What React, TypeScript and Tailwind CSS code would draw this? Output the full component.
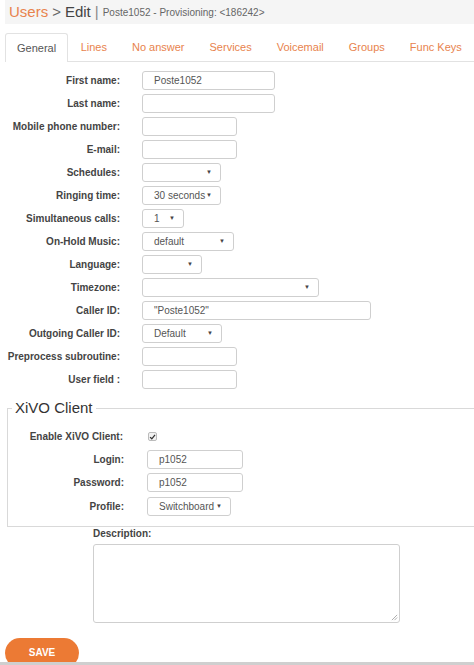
import React from 'react'

const font = { fontFamily: '"Liberation Sans", Arial, sans-serif' }

type Field = {
  label: string
  kind: 'text' | 'select'
  width: number
  value?: string
}

const fields: Field[] = [
  { label: 'First name:', kind: 'text', width: 133, value: 'Poste1052' },
  { label: 'Last name:', kind: 'text', width: 133 },
  { label: 'Mobile phone number:', kind: 'text', width: 95 },
  { label: 'E-mail:', kind: 'text', width: 95 },
  { label: 'Schedules:', kind: 'select', width: 79 },
  { label: 'Ringing time:', kind: 'select', width: 79, value: '30 seconds' },
  { label: 'Simultaneous calls:', kind: 'select', width: 42, value: '1' },
  { label: 'On-Hold Music:', kind: 'select', width: 92, value: 'default' },
  { label: 'Language:', kind: 'select', width: 60 },
  { label: 'Timezone:', kind: 'select', width: 177 },
  { label: 'Caller ID:', kind: 'text', width: 229, value: '"Poste1052"' },
  { label: 'Outgoing Caller ID:', kind: 'select', width: 80, value: 'Default' },
  { label: 'Preprocess subroutine:', kind: 'text', width: 95 },
  { label: 'User field :', kind: 'text', width: 95 },
]

const tabs = ['General', 'Lines', 'No answer', 'Services', 'Voicemail', 'Groups', 'Func Keys']

const Control: React.FC<{ f: Field }> = ({ f }) => (
  <div
    className="h-[19px] border border-[#cfcfcf] rounded-[3px] bg-white flex items-center justify-between pl-[11px] pr-[8px] text-[10px] text-[#555] whitespace-nowrap"
    style={{ width: f.width }}
  >
    <span>{f.value ?? ''}</span>
    {f.kind === 'select' && <span className="text-[6px] text-[#444]">▼</span>}
  </div>
)

const App: React.FC = () => {
  return (
    <div className="w-[474px] h-[665px] overflow-hidden bg-white relative" style={font}>
      {/* breadcrumb */}
      <div className="ml-[5px] h-[24px] bg-[#f5f5f5] flex items-center pl-[4px] gap-[4px] text-[#555] whitespace-nowrap">
        <span className="text-[15px] text-[#e8834d]">Users</span>
        <span className="text-[15px] text-[#666]">&gt;</span>
        <span className="text-[15px] text-[#444]">Edit</span>
        <span className="text-[15px] text-[#888]">|</span>
        <span className="text-[10px] text-[#666]">Poste1052 - Provisioning: &lt;186242&gt;</span>
      </div>

      {/* tabs */}
      <div className="ml-[5px] mt-[9px] flex border-b border-[#e2e2e2] h-[29px] text-[11px] whitespace-nowrap">
        {tabs.map((t, i) =>
          i === 0 ? (
            <div
              key={t}
              className="shrink-0 px-[11px] border border-b-0 border-[#e2e2e2] rounded-t-[3px] bg-white text-[#555] flex items-center -mb-px"
            >
              {t}
            </div>
          ) : (
            <div key={t} className="shrink-0 px-[12.5px] text-[#e8834d] flex items-center">
              {t}
            </div>
          )
        )}
      </div>

      {/* general fields */}
      <div className="mt-[7px]">
        {fields.map((f) => (
          <div key={f.label} className="h-[23px] flex items-center">
            <div className="w-[120px] shrink-0 text-right font-bold text-[10px] text-[#444] whitespace-nowrap">
              {f.label}
            </div>
            <div className="ml-[22px]">
              <Control f={f} />
            </div>
          </div>
        ))}
      </div>

      {/* XiVO client */}
      <fieldset className="ml-[7px] mr-[-10px] mt-[8px] border border-[#d9d9d9] pb-[8px] pt-[8px]">
        <legend className="ml-[4px] px-[3px] text-[15px] text-[#333] leading-[18px]">XiVO Client</legend>
        <div className="h-[23px] flex items-center">
          <div className="w-[115px] shrink-0 text-right font-bold text-[10px] text-[#444] whitespace-nowrap">
            Enable XiVO Client:
          </div>
          <div className="ml-[25px] w-[9px] h-[9px] border border-[#bbb] rounded-[2px] bg-[#f2f2f2] flex items-center justify-center">
            <svg viewBox="0 0 10 10" className="w-[8px] h-[8px]">
              <path d="M1.5 5.2 L4 7.6 L8.6 2" fill="none" stroke="#333" strokeWidth="1.8" />
            </svg>
          </div>
        </div>
        {[
          { label: 'Login:', kind: 'text', width: 96, value: 'p1052' },
          { label: 'Password:', kind: 'text', width: 96, value: 'p1052' },
          { label: 'Profile:', kind: 'select', width: 84, value: 'Switchboard' },
        ].map((f, i) => (
          <div key={f.label} className={`flex items-center ${i === 2 ? 'h-[24px] pt-[1px]' : 'h-[23px]'}`}>
            <div className="w-[116px] shrink-0 text-right font-bold text-[10px] text-[#444] whitespace-nowrap">
              {f.label}
            </div>
            <div className="ml-[23px]">
              <Control f={f as Field} />
            </div>
          </div>
        ))}
      </fieldset>

      {/* description */}
      <div className="ml-[93px] mt-[-1px]">
        <div className="font-bold text-[10px] text-[#444] h-[14px]">Description:</div>
        <div className="mt-[4px] w-[307px] h-[79px] border border-[#cfcfcf] rounded-[3px] bg-white flex items-end justify-end">
          <svg viewBox="0 0 8 8" className="w-[7px] h-[7px] mr-[1px] mb-[1px]">
            <path d="M7 1 L1 7 M7 4 L4 7" stroke="#999" strokeWidth="0.9" />
          </svg>
        </div>
      </div>

      {/* save */}
      <div className="ml-[5px] mt-[15px] h-[24px] overflow-hidden">
        <button className="w-[74px] h-[30px] rounded-[15px] bg-[#ec7a34] text-white font-bold text-[10px] pb-[2px]">
          SAVE
        </button>
      </div>
      <div className="h-[3px] bg-[#cfcfcf]" />
    </div>
  )
}

export default App
